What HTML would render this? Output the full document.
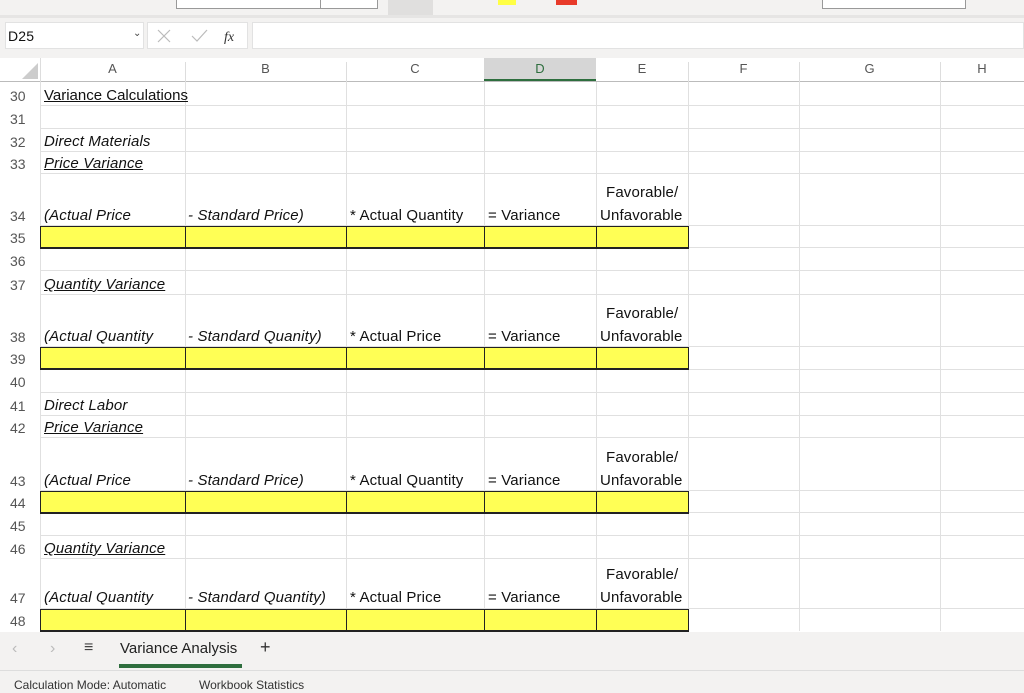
<!DOCTYPE html><html><head><style>
body{margin:0;width:1024px;height:693px;overflow:hidden;background:#fff;font-family:"Liberation Sans",sans-serif;position:relative}
div{position:absolute;box-sizing:border-box}
.t{font-size:15px;color:#111;white-space:nowrap;line-height:16px;letter-spacing:0.15px}
.i{font-style:italic}
.u{text-decoration:underline}
.rn{font-size:14px;color:#555;left:10px;letter-spacing:0}
.vl{width:1px;background:#e0e0e0;top:82px;height:549px}
.hl{height:1px;background:#e0e0e0;left:40px;width:984px}
.y{background:#ffff55;border:1px solid #222;border-bottom:2px solid #222}
.ch{font-size:13px;color:#555;top:61px;text-align:center}
</style></head><body>
<div style="left:0;top:0;width:1024px;height:15px;background:#f3f2f1"></div>
<div style="left:0;top:15px;width:1024px;height:3px;background:#e6e5e4"></div>
<div style="left:176px;top:0;width:145px;height:9px;background:#fff;border:1px solid #999;border-top:none"></div>
<div style="left:320px;top:0;width:58px;height:9px;background:#fff;border:1px solid #999;border-top:none"></div>
<div style="left:388px;top:0;width:45px;height:15px;background:#e0dfde"></div>
<div style="left:498px;top:0;width:18px;height:5px;background:#ffff44"></div>
<div style="left:556px;top:0;width:21px;height:5px;background:#e83a2a"></div>
<div style="left:822px;top:0;width:144px;height:9px;background:#fff;border:1px solid #999;border-top:none"></div>
<div style="left:0;top:18px;width:1024px;height:40px;background:#f3f2f1"></div>
<div style="left:5px;top:22px;width:139px;height:27px;background:#fff;border:1px solid #e2e2e2"></div>
<div class="t" style="left:8px;top:28px;font-size:14px">D25</div>
<div style="left:133px;top:28px;font-size:10px;color:#444">&#8964;</div>
<div style="left:147px;top:22px;width:101px;height:27px;background:#fff;border:1px solid #e2e2e2"></div>
<svg style="position:absolute;left:156px;top:28px" width="90" height="16"><path d="M2 2L14 14M14 2L2 14" stroke="#bbb" stroke-width="1.2"/><path d="M36 8L41 13L51 2" stroke="#bbb" stroke-width="1.2" fill="none"/><text x="68" y="13" font-family="Liberation Serif" font-style="italic" font-size="14" fill="#333">fx</text></svg>
<div style="left:252px;top:22px;width:772px;height:27px;background:#fff;border:1px solid #e2e2e2"></div>
<div style="left:0;top:58px;width:1024px;height:24px;background:#fff;border-bottom:1px solid #bbb"></div>
<svg style="position:absolute;left:22px;top:63px" width="16" height="16"><path d="M16 0L16 16L0 16Z" fill="#ccc"/></svg>
<div style="left:484px;top:58px;width:112px;height:23px;background:#d6d6d6;border-bottom:2px solid #2e6e3e"></div>
<div class="ch" style="left:40px;width:145px">A</div>
<div class="ch" style="left:185px;width:161px">B</div>
<div class="ch" style="left:346px;width:138px">C</div>
<div class="ch" style="left:484px;width:112px;color:#2e6e3e">D</div>
<div class="ch" style="left:596px;width:92px">E</div>
<div class="ch" style="left:688px;width:111px">F</div>
<div class="ch" style="left:799px;width:141px">G</div>
<div class="ch" style="left:940px;width:84px">H</div>
<div style="left:40px;top:58px;width:1px;height:24px;background:#ddd"></div>
<div style="left:185px;top:62px;width:1px;height:20px;background:#ddd"></div>
<div style="left:346px;top:62px;width:1px;height:20px;background:#ddd"></div>
<div style="left:688px;top:62px;width:1px;height:20px;background:#ddd"></div>
<div style="left:799px;top:62px;width:1px;height:20px;background:#ddd"></div>
<div style="left:940px;top:62px;width:1px;height:20px;background:#ddd"></div>
<div class="vl" style="left:40px"></div><div class="vl" style="left:185px"></div><div class="vl" style="left:346px"></div><div class="vl" style="left:484px"></div><div class="vl" style="left:596px"></div><div class="vl" style="left:688px"></div><div class="vl" style="left:799px"></div><div class="vl" style="left:940px"></div>
<div class="hl" style="top:105px"></div><div class="hl" style="top:128px"></div><div class="hl" style="top:151px"></div><div class="hl" style="top:173px"></div><div class="hl" style="top:247px"></div><div class="hl" style="top:270px"></div><div class="hl" style="top:294px"></div><div class="hl" style="top:369px"></div><div class="hl" style="top:392px"></div><div class="hl" style="top:415px"></div><div class="hl" style="top:437px"></div><div class="hl" style="top:512px"></div><div class="hl" style="top:535px"></div><div class="hl" style="top:558px"></div><div class="hl" style="top:225px"></div><div class="hl" style="top:346px"></div><div class="hl" style="top:490px"></div><div class="hl" style="top:608px"></div>
<div class="t rn" style="top:88px">30</div><div class="t rn" style="top:111px">31</div><div class="t rn" style="top:134px">32</div><div class="t rn" style="top:156px">33</div><div class="t rn" style="top:208px">34</div><div class="t rn" style="top:230px">35</div><div class="t rn" style="top:253px">36</div><div class="t rn" style="top:277px">37</div><div class="t rn" style="top:329px">38</div><div class="t rn" style="top:351px">39</div><div class="t rn" style="top:374px">40</div><div class="t rn" style="top:398px">41</div><div class="t rn" style="top:420px">42</div><div class="t rn" style="top:473px">43</div><div class="t rn" style="top:495px">44</div><div class="t rn" style="top:518px">45</div><div class="t rn" style="top:541px">46</div><div class="t rn" style="top:590px">47</div><div class="t rn" style="top:613px">48</div>
<div class="t u" style="left:44px;top:88px;letter-spacing:0">Variance Calculations</div>
<div class="t i" style="left:44px;top:134px">Direct Materials</div>
<div class="t i u" style="left:44px;top:156px">Price Variance</div>
<div class="t i u" style="left:44px;top:277px">Quantity Variance</div>
<div class="t i" style="left:44px;top:398px">Direct Labor</div>
<div class="t i u" style="left:44px;top:420px">Price Variance</div>
<div class="t i u" style="left:44px;top:541px">Quantity Variance</div>
<div class="t i" style="left:44px;top:208px">(Actual Price</div><div class="t i" style="left:188px;top:208px">- Standard Price)</div><div class="t" style="left:350px;top:208px">* Actual Quantity</div><div class="t" style="left:488px;top:208px">= Variance</div><div class="t" style="left:606px;top:185px">Favorable/</div><div class="t" style="left:600px;top:208px">Unfavorable</div>
<div class="t i" style="left:44px;top:329px">(Actual Quantity</div><div class="t i" style="left:188px;top:329px">- Standard Quanity)</div><div class="t" style="left:350px;top:329px">* Actual Price</div><div class="t" style="left:488px;top:329px">= Variance</div><div class="t" style="left:606px;top:306px">Favorable/</div><div class="t" style="left:600px;top:329px">Unfavorable</div>
<div class="t i" style="left:44px;top:473px">(Actual Price</div><div class="t i" style="left:188px;top:473px">- Standard Price)</div><div class="t" style="left:350px;top:473px">* Actual Quantity</div><div class="t" style="left:488px;top:473px">= Variance</div><div class="t" style="left:606px;top:450px">Favorable/</div><div class="t" style="left:600px;top:473px">Unfavorable</div>
<div class="t i" style="left:44px;top:590px">(Actual Quantity</div><div class="t i" style="left:188px;top:590px">- Standard Quantity)</div><div class="t" style="left:350px;top:590px">* Actual Price</div><div class="t" style="left:488px;top:590px">= Variance</div><div class="t" style="left:606px;top:567px">Favorable/</div><div class="t" style="left:600px;top:590px">Unfavorable</div>
<div class="y" style="left:40px;top:226px;width:146px;height:23px"></div><div class="y" style="left:185px;top:226px;width:162px;height:23px"></div><div class="y" style="left:346px;top:226px;width:139px;height:23px"></div><div class="y" style="left:484px;top:226px;width:113px;height:23px"></div><div class="y" style="left:596px;top:226px;width:93px;height:23px"></div>
<div class="y" style="left:40px;top:347px;width:146px;height:23px"></div><div class="y" style="left:185px;top:347px;width:162px;height:23px"></div><div class="y" style="left:346px;top:347px;width:139px;height:23px"></div><div class="y" style="left:484px;top:347px;width:113px;height:23px"></div><div class="y" style="left:596px;top:347px;width:93px;height:23px"></div>
<div class="y" style="left:40px;top:491px;width:146px;height:23px"></div><div class="y" style="left:185px;top:491px;width:162px;height:23px"></div><div class="y" style="left:346px;top:491px;width:139px;height:23px"></div><div class="y" style="left:484px;top:491px;width:113px;height:23px"></div><div class="y" style="left:596px;top:491px;width:93px;height:23px"></div>
<div class="y" style="left:40px;top:609px;width:146px;height:23px"></div><div class="y" style="left:185px;top:609px;width:162px;height:23px"></div><div class="y" style="left:346px;top:609px;width:139px;height:23px"></div><div class="y" style="left:484px;top:609px;width:113px;height:23px"></div><div class="y" style="left:596px;top:609px;width:93px;height:23px"></div>
<div style="left:0;top:632px;width:1024px;height:38px;background:#f3f2f1"></div>
<div class="t" style="left:12px;top:641px;color:#bbb;font-size:16px">&#8249;</div>
<div class="t" style="left:50px;top:641px;color:#bbb;font-size:16px">&#8250;</div>
<div class="t" style="left:84px;top:640px;color:#444;font-size:16px">&#8801;</div>
<div class="t" style="left:120px;top:641px;color:#222;font-size:15px;letter-spacing:0">Variance Analysis</div>
<div style="left:119px;top:664px;width:123px;height:4px;background:#2e6e3e"></div>
<div class="t" style="left:260px;top:639px;color:#333;font-size:18px">+</div>
<div style="left:0;top:670px;width:1024px;height:1px;background:#ddd"></div>
<div style="left:0;top:671px;width:1024px;height:22px;background:#f3f2f1"></div>
<div class="t" style="left:14px;top:677px;font-size:12px;color:#333;letter-spacing:0">Calculation Mode: Automatic</div>
<div class="t" style="left:199px;top:677px;font-size:12px;color:#333;letter-spacing:0">Workbook Statistics</div>
</body></html>
